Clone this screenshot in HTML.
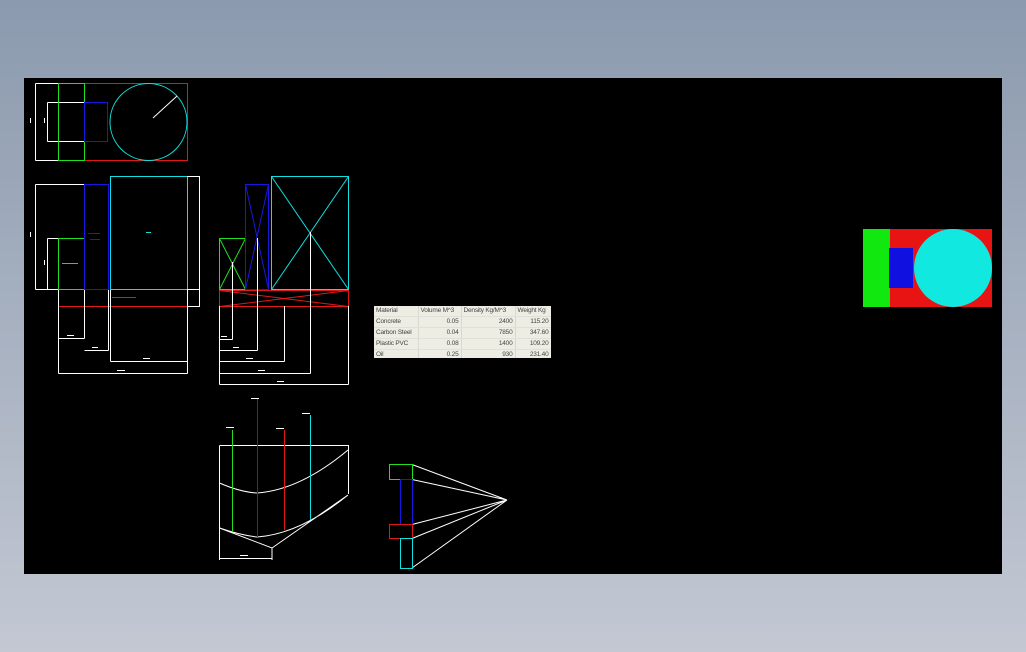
<!DOCTYPE html>
<html><head><meta charset="utf-8"><style>
html,body{margin:0;padding:0;width:1026px;height:652px;overflow:hidden;background:linear-gradient(#8b9aae,#c3c8d3);}
svg{position:absolute;left:0;top:0}
.t{position:absolute;left:374px;top:306px;width:177px;height:52px;overflow:hidden;background:#eeede4;font-family:"Liberation Sans",sans-serif;font-size:6.5px;letter-spacing:-0.2px;color:#444;}
.t table{border-collapse:collapse;width:177px;table-layout:fixed}
.t td{padding:0 2px;height:10px;line-height:10px;border-right:1px solid #d8d8d0;border-bottom:1px solid #e0e0d8;white-space:nowrap;overflow:hidden}
.r{text-align:right}
</style></head><body>
<svg width="1026" height="652" viewBox="0 0 1026 652" shape-rendering="crispEdges">
<rect x="24" y="78" width="978" height="496" fill="#000"/>
<g fill="none" stroke-width="1">
<rect x="84.5" y="83.5" width="103" height="77" stroke="#e01818"/>
<path d="M35.5 83.5H58.5M35.5 160.5H58.5M35.5 83.5V160.5" stroke="#fff"/>
<path d="M47.5 102.5H84M47.5 141.5H84M47.5 102.5V141.5" stroke="#fff"/>
<rect x="58.5" y="83.5" width="26" height="77" stroke="#20e020"/>
<rect x="84.5" y="102.5" width="23" height="39" stroke="#1818e0"/>
<circle cx="148.5" cy="122" r="38.5" stroke="#10e0e0" shape-rendering="auto"/>
<path d="M153 118L177 96" stroke="#fff" shape-rendering="auto"/>
<path d="M35.5 184.5H84M35.5 289.5H58M35.5 184.5V289.5" stroke="#fff"/>
<path d="M47.5 238.5H58M47.5 238.5V289.5" stroke="#fff"/>
<rect x="58.5" y="238.5" width="26" height="51" stroke="#20e020"/>
<rect x="84.5" y="184.5" width="24" height="105" stroke="#1818e0"/>
<rect x="110.5" y="176.5" width="77" height="113" stroke="#10e0e0"/>
<path d="M187 176.5H199.5V306.5H187M187 289.5H199" stroke="#fff"/>
<path d="M58.5 306.5H187.5" stroke="#e01818"/>
<path d="M58.5 290V373.5M84.5 290V338.5M108.5 290V350.5M110.5 290V361.5M187.5 290V373.5M58.5 338.5H84.5M84.5 350.5H108.5M110.5 361.5H187.5M58.5 373.5H187.5" stroke="#fff"/>
<g shape-rendering="auto">
<path d="M219.5 238.5L245.5 289.5M245.5 238.5L219.5 289.5" stroke="#20e020"/>
<path d="M245.5 184.5L268.5 289.5M268.5 184.5L245.5 289.5" stroke="#1818e0"/>
<path d="M271.5 176.5L348.5 289.5M348.5 176.5L271.5 289.5" stroke="#10e0e0"/>
<path d="M219.5 290.5L348.5 306.5M348.5 290.5L219.5 306.5" stroke="#e01818"/>
</g>
<rect x="219.5" y="238.5" width="26" height="51" stroke="#20e020"/>
<rect x="245.5" y="184.5" width="23" height="105" stroke="#1818e0"/>
<rect x="271.5" y="176.5" width="77" height="113" stroke="#10e0e0"/>
<rect x="219.5" y="290.5" width="129" height="16" stroke="#e01818"/>
<path d="M219.5 306V384.5M232.5 262V339.5M257.5 238V350.5M284.5 306V361.5M310.5 232V373.5M348.5 306V384.5M219.5 339.5H232.5M219.5 350.5H257.5M219.5 361.5H284.5M219.5 373.5H310.5M219.5 384.5H348.5" stroke="#fff"/>
<path d="M219.5 445.5H348.5V494M219.5 445.5V560M272 548V560M219.5 558.5H272" stroke="#fff"/>
<path d="M219.5 483Q240 492 257 493Q300 490 348 450M219.5 528Q240 535 257 537Q300 534 348 495M219.5 528L272 548L348 495" stroke="#fff" shape-rendering="auto"/>
<path d="M232.5 430V531" stroke="#20e020"/>
<path d="M257.5 398V537" stroke="#2020ff"/>
<path d="M284.5 430V530" stroke="#e01818"/>
<path d="M310.5 415V520" stroke="#10e0e0"/>
<path d="M412 464.5L507 500L412 479.5M412 524.5L507 500L412 538.5M412 568L507 500" stroke="#fff" shape-rendering="auto"/>
<rect x="389.5" y="464.5" width="23" height="15" stroke="#20e020"/>
<rect x="400.5" y="479.5" width="12" height="45" stroke="#1818e0"/>
<rect x="389.5" y="524.5" width="23" height="14" stroke="#e01818"/>
<rect x="400.5" y="538.5" width="12" height="30" stroke="#10e0e0"/>
</g>
<g fill="#fff">
<rect x="30" y="118" width="1" height="5"/><rect x="44" y="118" width="1" height="5"/>
<rect x="30" y="232" width="1" height="5"/><rect x="44" y="260" width="1" height="5"/>
<rect x="67" y="335" width="7" height="1"/><rect x="92" y="347" width="6" height="1"/><rect x="143" y="358" width="7" height="1"/><rect x="117" y="370" width="8" height="1"/>
<rect x="221" y="336" width="6" height="1"/><rect x="233" y="347" width="6" height="1"/><rect x="246" y="358" width="7" height="1"/><rect x="258" y="370" width="7" height="1"/><rect x="277" y="381" width="7" height="1"/>
<rect x="226" y="427" width="8" height="1"/><rect x="251" y="398" width="8" height="1"/><rect x="276" y="428" width="8" height="1"/><rect x="302" y="413" width="8" height="1"/><rect x="240" y="555" width="8" height="1"/>
</g>
<g fill="#10e0e0"><rect x="146" y="232" width="5" height="1"/></g>
<g fill="#20e020"><rect x="62" y="263" width="16" height="1"/></g>
<g fill="#1818e0"><rect x="88" y="233" width="12" height="1"/><rect x="90" y="239" width="10" height="1"/></g>
<g fill="#e01818"><rect x="112" y="297" width="24" height="1"/></g>
<rect x="863" y="229" width="27" height="78" fill="#10e810"/>
<rect x="890" y="229" width="102" height="78" fill="#e81414"/>
<rect x="889" y="248" width="24" height="40" fill="#1010e0"/>
<circle cx="953" cy="268" r="39" fill="#10e8e0" shape-rendering="auto"/>
</svg>
<div class="t"><table>
<colgroup><col style="width:44px"><col style="width:43px"><col style="width:54px"><col style="width:36px"></colgroup>
<tr><td>Material</td><td>Volume M^3</td><td>Density Kg/M^3</td><td>Weight Kg</td></tr>
<tr><td>Concrete</td><td class="r">0.05</td><td class="r">2400</td><td class="r">115.20</td></tr>
<tr><td>Carbon Steel</td><td class="r">0.04</td><td class="r">7850</td><td class="r">347.60</td></tr>
<tr><td>Plastic PVC</td><td class="r">0.08</td><td class="r">1400</td><td class="r">109.20</td></tr>
<tr><td>Oil</td><td class="r">0.25</td><td class="r">930</td><td class="r">231.40</td></tr>
</table></div>
</body></html>
